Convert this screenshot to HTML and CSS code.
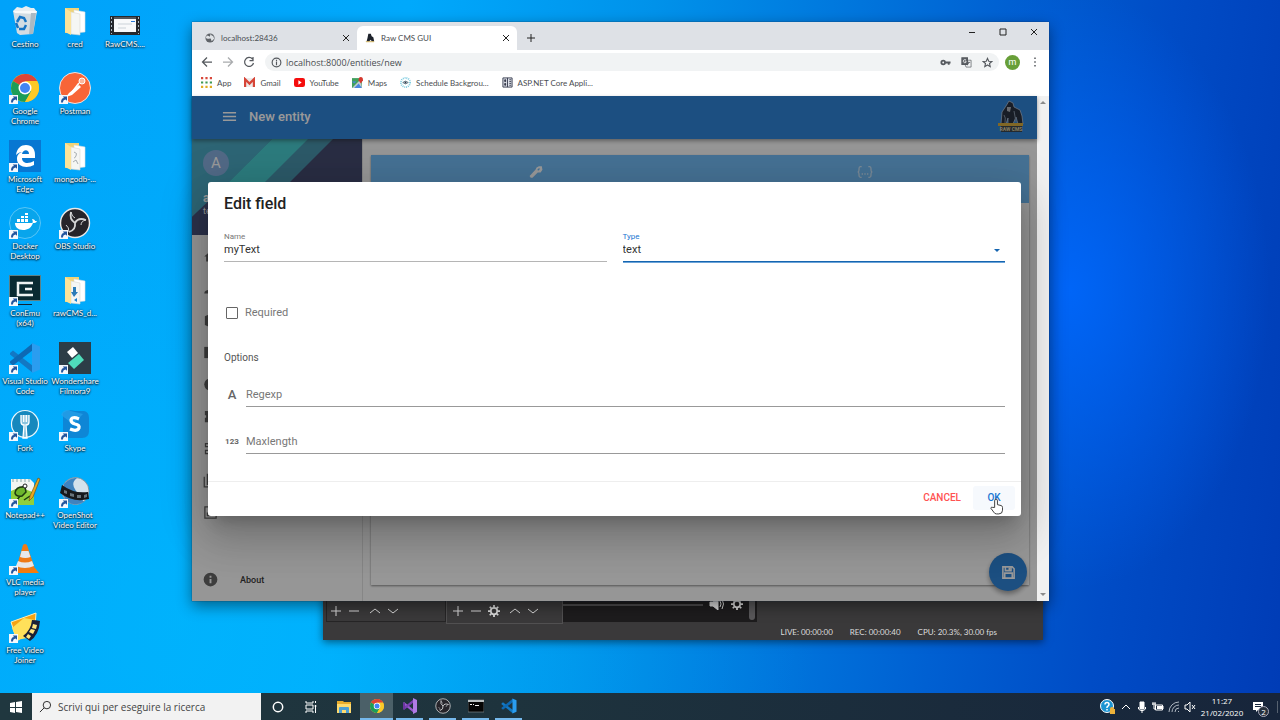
FILE: index.html
```
<!DOCTYPE html>
<html lang="it">

<head>
    <meta charset="UTF-8">
    <meta name="viewport" content="width=device-width, initial-scale=1.0">
    <title>Raw CMS GUI</title>
    <link rel="stylesheet" href="styles.css">
</head>

<body>
    <!-- Shared icons -->
    <svg class="sprite" aria-hidden="true">
        <symbol id="shortcut" viewBox="0 0 32 32">
            <rect x="0" y="23" width="9" height="9" fill="#f4f8fc" />
            <path d="M2 30.500c0-3 1-4.300 3-4.500l-1.200-1.500H8v4.200L6.600 27.500C4.500 27.800 4 29 4 30.500z" fill="#23559e" />
        </symbol>
        <symbol id="chrome" viewBox="0 0 32 32">
            <circle cx="16" cy="16" r="14" fill="#fbc928" />
            <path d="M16 16 3.900 9A14 14 0 0 1 28.100 9z" fill="#dc4437" />
            <path d="M16 2a14 14 0 0 1 12.100 7H16z" fill="#dc4437" />
            <path d="M3.900 9A14 14 0 0 0 16 30l6-10.500L16 16z" fill="#1c9d58" />
            <path d="M16 9h12.100A14 14 0 0 1 16 30l6.200-10.500z" fill="#fbc928" />
            <circle cx="16" cy="16" r="6.500" fill="#fff" />
            <circle cx="16" cy="16" r="5" fill="#4385f3" />
        </symbol>
        <symbol id="obs" viewBox="0 0 32 32">
            <circle cx="16" cy="16" r="14.500" fill="#26242a" stroke="#e8e8e8" stroke-width="1.400" />
            <g fill="none" stroke="#d4d4d6" stroke-width="1.800">
                <path d="M16 16Q10 12 12 5" />
                <path d="M16 16q3-6 11-3" />
                <path d="M16 16q1 7-6 9" />
                <path d="M12 5q1 5 4 6M27 13q-5 1-5 5M10 25q0-5-3-7" stroke-width="1" />
            </g>
        </symbol>
        <symbol id="vscode" viewBox="0 0 32 32">
            <path d="m1 11 3-2.500L24 24v7L1 12.500z" fill="#1278c4" />
            <path d="m1 21 3 2.500L24 8V1L1 19.500z" fill="#0d69b4" />
            <path d="m23 1 8 3.500v23L23 31z" fill="#2a9df0" />
        </symbol>
        <symbol id="folder" viewBox="0 0 32 32">
            <path d="M6 3h14v25H6z" fill="#f0d377" />
            <path d="m15 5 11 2v20l-11 1z" fill="#fff" stroke="#d9dee0" stroke-width=".6" />
            <path d="m12 7 9 2v21l-9-1z" fill="#f5f6f4" stroke="#d9d9d0" stroke-width=".6" />
            <path d="m6 3 6 4v23l-6-3z" fill="#fbe39a" />
        </symbol>
        <symbol id="gear" viewBox="0 0 24 24">
            <circle cx="12" cy="12" r="6.500" fill="none" stroke="currentColor" stroke-width="3.500" />
            <path d="M12 0v5M12 19v5M0 12h5M19 12h5M3.500 3.500 7 7M17 17l3.500 3.500M20.500 3.500 17 7M7 17l-3.500 3.500" stroke="currentColor" stroke-width="3.500" />
        </symbol>
    </svg>

    <main class="desktop">
        <div class="shortcuts">
            <div class="shortcut-column">
                <button class="shortcut">
                    <svg viewBox="0 0 32 32">
                        <path d="m4 6 4-4 5 1 4-2 5 2 3 0 3 4z" fill="#e9eef1" />
                        <path d="M4 6h24l-4 23-13 1-3-2z" fill="#d3dce2" />
                        <path d="M4 6h24l-1 3-21-1z" fill="#f7f9fa" />
                        <path d="M22 8h5l-3 21-4 0z" fill="#aab9c3" />
                        <path d="m8 17 3-5 4 1 2 4M17 20l-2 4h-5M7 18l2 5" fill="none" stroke="#1674c4" stroke-width="2.500" />
                    </svg>
                    <span>Cestino</span>
                </button>
                <button class="shortcut">
                    <svg viewBox="0 0 32 32"><use href="#chrome" /><use href="#shortcut" /></svg>
                    <span>Google<br>Chrome</span>
                </button>
                <button class="shortcut">
                    <svg viewBox="0 0 32 32">
                        <rect width="32" height="32" fill="#0877d2" />
                        <path d="M7 15c1-7 5-10 10-10 6 0 9 4 9 10v3H13c0 6 7 6 12 3v4c-7 4-17 2-17-6 0-4 2-6 5-7-2 0-4 1-6 3zm6-1h7c0-5-6-5-7 0z" fill="#fff" />
                        <use href="#shortcut" />
                    </svg>
                    <span>Microsoft<br>Edge</span>
                </button>
                <button class="shortcut">
                    <svg viewBox="0 0 32 32">
                        <circle cx="16" cy="16" r="15.500" fill="#08a5ec" stroke="#6ccdf8" stroke-width=".8" />
                        <path d="M6 16h17c1 0 1-2 0-4 2 0 3 1 3 2l2 0c-1 2-2 2-4 2-2 5-5 7-10 7-5 0-8-3-8-7z" fill="#fff" />
                        <path d="M8 12h3v3H8zM12 12h3v3h-3zM16 12h3v3h-3zM12 9h3v2h-3zM16 9h3v2h-3zM16 6h3v2h-3z" fill="#fff" />
                        <use href="#shortcut" />
                    </svg>
                    <span>Docker<br>Desktop</span>
                </button>
                <button class="shortcut">
                    <svg viewBox="0 0 32 32">
                        <path d="M0 1h32v26H0z" fill="#5d8084" />
                        <path d="M1 2h30v24H1z" fill="#092a32" />
                        <path d="M24 9H9v12h15M16 15h7" fill="none" stroke="#eef2f2" stroke-width="2.500" />
                        <path d="M9 30h14v1H9z" fill="#123" />
                        <use href="#shortcut" />
                    </svg>
                    <span>ConEmu<br>(x64)</span>
                </button>
                <button class="shortcut">
                    <svg viewBox="0 0 32 32"><use href="#vscode" /><use href="#shortcut" /></svg>
                    <span>Visual Studio<br>Code</span>
                </button>
                <button class="shortcut">
                    <svg viewBox="0 0 32 32">
                        <circle cx="16" cy="15" r="13.500" fill="#1688bd" stroke="#e9f6fb" stroke-width="1.200" />
                        <path d="M12 6v7q0 3 3 3l-1 13h4l-1-13q3 0 3-3V6M14.700 6v7M17.300 6v7" fill="#fff" fill-opacity=".5" stroke="#fff" stroke-width="1.300" />
                        <use href="#shortcut" />
                    </svg>
                    <span>Fork</span>
                </button>
                <button class="shortcut">
                    <svg viewBox="0 0 32 32">
                        <path d="M2 3h19l4 4v22H2z" fill="#f3f6f3" />
                        <path d="M2 15q9-6 23 2v12H2z" fill="#8fcf3c" />
                        <path d="M4 3v3M8 3v3M12 3v3M16 3v3M20 3v3" stroke="#8aa" />
                        <path d="M6 17q1-7 10-6l1 5-4 4q-6 1-7-3zM8 24l3-4M15 24l6-4" fill="#6cb52d" stroke="#1d3b10" stroke-width="1.500" />
                        <circle cx="16" cy="10" r="2" fill="#fff" stroke="#222" />
                        <path d="m20 25 1-5L29 2l2 1-7 18z" fill="#e9a720" stroke="#6a4a12" stroke-width=".6" />
                        <use href="#shortcut" />
                    </svg>
                    <span>Notepad++</span>
                </button>
                <button class="shortcut">
                    <svg viewBox="0 0 32 32">
                        <path d="m6 25 20 0 4 5H3z" fill="#f47c0e" />
                        <path d="M14 2q2-2 4 0l8 24q-9 4-19 0z" fill="#ee7a17" />
                        <path d="m12.500 8 7 0 2 6q-5 2-10.500 0zM9 18q7 3 14 0l2 5q-9 4-18 0z" fill="#e6e8ea" />
                        <use href="#shortcut" />
                    </svg>
                    <span>VLC media<br>player</span>
                </button>
                <button class="shortcut">
                    <svg viewBox="0 0 32 32">
                        <path d="m2 11 25-9-1 14-18 14z" fill="#f6a313" stroke="#fff0b8" />
                        <path d="m3 17 12-10 11 2-8 18-10 2z" fill="#ffe05a" />
                        <path d="M23 9q4 0 8 1-1 14-10 20l-7-5q8-6 9-16z" fill="#1b2036" />
                        <path d="m24 13 4 1-1 4-4-1zM22 18l4 1-2 4-4-2zM19 23l3 2-2 3-3-2z" fill="#ffe680" />
                        <use href="#shortcut" />
                    </svg>
                    <span>Free Video<br>Joiner</span>
                </button>
            </div>

            <div class="shortcut-column">
                <button class="shortcut">
                    <svg viewBox="0 0 32 32"><use href="#folder" /></svg>
                    <span>cred</span>
                </button>
                <button class="shortcut">
                    <svg viewBox="0 0 32 32">
                        <circle cx="16" cy="16" r="15.500" fill="#f86537" stroke="#fff" stroke-width=".8" />
                        <path d="m7 25 3-4 10-8 2 2-9 8z" fill="#fff" />
                        <circle cx="23" cy="9" r="3" fill="#fbb79d" stroke="#fff" />
                        <path d="m13 20 7-9" stroke="#fff" stroke-width="1.500" />
                        <use href="#shortcut" />
                    </svg>
                    <span>Postman</span>
                </button>
                <button class="shortcut">
                    <svg viewBox="0 0 32 32">
                        <use href="#folder" />
                        <path d="M15 12q4 1 2 4t-2 2M14 22l3-2 2 4" fill="none" stroke="#a7adb0" />
                    </svg>
                    <span>mongodb-...</span>
                </button>
                <button class="shortcut">
                    <svg viewBox="0 0 32 32"><use href="#obs" /><use href="#shortcut" /></svg>
                    <span>OBS Studio</span>
                </button>
                <button class="shortcut">
                    <svg viewBox="0 0 32 32">
                        <use href="#folder" />
                        <path d="M14 13h3v5h2l-4 5-3-5h2z" fill="#2c7cb8" />
                        <path d="m15 26 3-2v4z" fill="#167fd2" />
                    </svg>
                    <span>rawCMS_d...</span>
                </button>
                <button class="shortcut">
                    <svg viewBox="0 0 32 32">
                        <rect width="32" height="32" fill="#2c3d47" />
                        <path d="m8 10 6-5 5 6-6 5z" fill="#fff" />
                        <path d="m9 21 11-9 5 6-10 9z" fill="#4fdcbb" />
                        <use href="#shortcut" />
                    </svg>
                    <span>Wondershare<br>Filmora9</span>
                </button>
                <button class="shortcut">
                    <svg viewBox="0 0 32 32">
                        <path d="M4 4q5-4 12-2h9q5 1 5 7v13q0 7-7 7H9q-6-2-5-9z" fill="#0e86d6" />
                        <path d="M2 6q3-7 10-4l12 3-10 10z" fill="#2aa2ea" fill-opacity=".7" />
                        <path d="M20 10q-7-3-8 1 0 3 4 4 5 1 4 4-2 4-9 1" fill="none" stroke="#fff" stroke-width="3.200" />
                        <use href="#shortcut" />
                    </svg>
                    <span>Skype</span>
                </button>
                <button class="shortcut">
                    <svg viewBox="0 0 32 32">
                        <circle cx="16.500" cy="15" r="13.500" fill="#d5e2ec" stroke="#7c8790" stroke-width=".8" />
                        <path d="M5 8q6-7 13-6-7 5-1 13l8 11q-15 7-21-7z" fill="#3f83bf" />
                        <path d="M3 9q12 9 26 7l1 7q-16 4-29-6z" fill="#17191d" />
                        <path d="m5 14 3 1v3l-3-1zM11 17l4 1v3l-4-1zM18 19h4v3h-4zM25 19l3-1v3l-3 1z" fill="#68737c" />
                        <use href="#shortcut" />
                    </svg>
                    <span>OpenShot<br>Video Editor</span>
                </button>
            </div>

            <div class="shortcut-column">
                <button class="shortcut">
                    <svg viewBox="0 0 32 32">
                        <path d="M1 11h30v19H1z" fill="#26282c" />
                        <path d="M5 12h22v15H5z" fill="#f8f9fa" />
                        <path d="M5 12h22v2H5z" fill="#52565c" />
                        <path d="M9 19h14M9 23h8" stroke="#cbd2d8" />
                        <path d="M22 16h4v1h-4z" fill="#2b78d6" />
                        <path d="M2.500 12v17M29.500 12v17" stroke="#aebac4" stroke-dasharray="2 2" />
                    </svg>
                    <span>RawCMS....</span>
                </button>
            </div>
        </div>

        <!-- OBS, mostly hidden behind the browser -->
        <section class="obs-window">
            <div class="obs-docks">
                <div class="obs-dock">
                    <svg viewBox="0 0 12 12"><path d="M1 6h10M6 1v10" /></svg>
                    <svg viewBox="0 0 12 12"><path d="M1 6h10" /></svg>
                    <svg class="obs-gap" viewBox="0 0 12 12"><path d="m1 8 5-4 5 4" /></svg>
                    <svg viewBox="0 0 12 12"><path d="m1 4 5 4 5-4" /></svg>
                </div>
                <div class="obs-dock obs-sources">
                    <svg viewBox="0 0 12 12"><path d="M1 6h10M6 1v10" /></svg>
                    <svg viewBox="0 0 12 12"><path d="M1 6h10" /></svg>
                    <svg viewBox="0 0 12 12"><use href="#gear" /></svg>
                    <svg class="obs-gap" viewBox="0 0 12 12"><path d="m1 8 5-4 5 4" /></svg>
                    <svg viewBox="0 0 12 12"><path d="m1 4 5 4 5-4" /></svg>
                </div>
                <div class="obs-mixer">
                    <span class="obs-slider"></span>
                    <svg class="obs-volume" viewBox="0 0 16 12"><path d="M1 4h3l5-4v12L4 8H1z" fill="currentColor" /><path d="M11 3q2 3 0 6M13 1q3 5 0 10" /></svg>
                    <svg viewBox="0 0 12 12"><use href="#gear" /></svg>
                    <span class="obs-scroll"></span>
                </div>
            </div>
            <div class="obs-status">
                <span>LIVE: 00:00:00</span>
                <span>REC: 00:00:40</span>
                <span>CPU: 20.3%, 30.00 fps</span>
            </div>
        </section>

        <section class="browser">
            <div class="tab-strip">
                <div class="browser-tab">
                    <svg viewBox="0 0 12 12"><circle cx="6" cy="6" r="5.500" fill="#5f6368" /><path d="M2 3q3 0 4 2T3 7L1 6zM7 1q0 2 3 3l1 3-3 3-1-3-2-1z" fill="#dfe2e6" /></svg>
                    <span>localhost:28436</span>
                    <button class="tab-close" aria-label="Close tab"><svg viewBox="0 0 8 8"><path d="m1 1 6 6M7 1 1 7" /></svg></button>
                </div>
                <div class="browser-tab active">
                    <svg viewBox="0 0 12 12"><path d="M4 1h3l1 3 2 1 1 5H8L7 8l-2 2H2l1-4z" fill="#1d222b" /><path d="M1 10h10v1H1z" fill="#c6a23f" /></svg>
                    <span>Raw CMS GUI</span>
                    <button class="tab-close" aria-label="Close tab"><svg viewBox="0 0 8 8"><path d="m1 1 6 6M7 1 1 7" /></svg></button>
                </div>
                <button class="new-tab" aria-label="New tab"><svg viewBox="0 0 10 10"><path d="M1 5h8M5 1v8" /></svg></button>
                <div class="window-buttons">
                    <button aria-label="Minimize"><svg viewBox="0 0 8 8"><path d="M1 4.500h6" /></svg></button>
                    <button aria-label="Maximize"><svg viewBox="0 0 8 8"><path d="M1 1h6v6H1z" /></svg></button>
                    <button aria-label="Close"><svg viewBox="0 0 8 8"><path d="m1 1 6 6M7 1 1 7" /></svg></button>
                </div>
            </div>

            <div class="toolbar">
                <button aria-label="Back"><svg viewBox="0 0 24 24"><path d="M22 12H4M12 3l-9 9 9 9" /></svg></button>
                <button class="faded" aria-label="Forward"><svg viewBox="0 0 24 24"><path d="M2 12h18M12 3l9 9-9 9" /></svg></button>
                <button aria-label="Reload"><svg viewBox="0 0 24 24"><path d="M19 6a9 9 0 1 0 2 8M20 2v7h-7" /></svg></button>
                <div class="omnibox">
                    <svg viewBox="0 0 24 24"><circle cx="12" cy="12" r="9.500" /><path d="M12 10v8M12 6v2.500" /></svg>
                    <input type="text" aria-label="Address" value="localhost:8000/entities/new">
                    <svg viewBox="0 0 24 24"><circle cx="7" cy="12" r="4" stroke-width="4" /><path d="M12 12h11M19 12v5" stroke-width="4" /></svg>
                    <svg viewBox="0 0 24 24"><path d="M2 2h12v14H2z" fill="#5f6368" /><path d="M14 7h8v15H11l-2-5M14 12h6M17 10v2q0 4-4 6" stroke-width="1.500" /><path d="M11 6.500a3.500 3.500 0 1 0 0 5V9H8" stroke="#fff" stroke-width="1.500" /></svg>
                    <svg viewBox="0 0 24 24"><path d="m12 3 2.700 6.200 6.800.6-5.100 4.500 1.500 6.700-5.900-3.500L6.100 21l1.500-6.700-5.100-4.500 6.800-.6z" /></svg>
                </div>
                <button class="profile">m</button>
                <button aria-label="Menu"><svg viewBox="0 0 24 24"><path d="M12 3v3M12 10.500v3M12 18v3" stroke-width="3" /></svg></button>
            </div>

            <nav class="bookmarks">
                <a href="#"><svg viewBox="0 0 10 10"><g fill="none" stroke-width="2" stroke-dasharray="2 2"><path d="M0 1h10" stroke="#d8483b" /><path d="M0 5h10" stroke="#3f9955" /><path d="M0 9h10" stroke="#e2ac22" /></g></svg>App</a>
                <a href="#"><svg viewBox="0 0 10 10"><path d="M0 1h10v8H0z" fill="#eceaea" /><path d="M1 9V2l4 4 4-4v7" fill="none" stroke="#d64538" stroke-width="2" /></svg>Gmail</a>
                <a href="#"><svg viewBox="0 0 10 10"><rect y="1" width="10" height="8" rx="2" fill="#f50d0d" /><path d="m4 3 3 2-3 2z" fill="#fff" /></svg>YouTube</a>
                <a href="#"><svg viewBox="0 0 10 10"><path d="M0 1h9v9H0z" fill="#41a05d" /><path d="m0 10 8-8 1 8z" fill="#c2ccd0" /><path d="m0 4 4 0-2 2zM2 10l4-4 3 4z" fill="#4a86e0" /><path d="M8 6 6 3q0-3 2-3t2 3z" fill="#d5392f" /></svg>Maps</a>
                <a href="#"><svg viewBox="0 0 12 12"><circle cx="6" cy="6" r="5" fill="none" stroke="#7ccbe0" stroke-dasharray="1 1" stroke-width="2" /><path d="M3 6q3-3 6 0-3 3-6 0" fill="none" stroke="#50717f" /><circle cx="6" cy="6" r="1" fill="#334" /></svg>Schedule Backgrou...</a>
                <a href="#"><svg viewBox="0 0 12 12"><path d="M1 1h10v10H1zM6 1v10" fill="#dfe2ea" stroke="#343a4d" /><path d="M3 3h1v2H3zM3 7h1v2H3zM8 3h2M8 5h2M8 7h2M8 9h2" stroke="#343a4d" /></svg>ASP.NET Core Appli...</a>
            </nav>

            <div class="viewport">
                <div class="app">
                    <header class="app-bar">
                        <button aria-label="Toggle menu"><svg viewBox="0 0 16 16"><path d="M1 4h14M1 8h14M1 12h14" stroke="currentColor" stroke-width="1.500" /></svg></button>
                        <h1>New entity</h1>
                        <svg class="app-logo" viewBox="0 0 28 34">
                            <path d="M4 25h21v7H4z" fill="#27313a" />
                            <path d="M9 6 12 1l4 2 1 4 6 3 2 6 1 8h-5l-2-7-3 7h-5v-6l-2 6H4l1-12z" fill="#111b2c" stroke="#b9c9dd" stroke-opacity=".7" />
                            <path d="m10 7 4 0-1 5-3-1z" fill="#a4a9b0" />
                            <path d="M7 15q2 2 1 8M17 11l2 11" fill="none" stroke="#76869a" />
                            <path d="M1 23h25v3H1z" fill="#d3a32a" />
                            <text x="14" y="31" text-anchor="middle">RAW CMS</text>
                        </svg>
                    </header>

                    <div class="app-body">
                        <aside class="drawer">
                            <div class="drawer-user">
                                <svg class="drawer-art" viewBox="0 0 170 95" preserveAspectRatio="none" aria-hidden="true">
                                    <path d="M0 0h170v95H0z" fill="#303960" />
                                    <path d="M0 0h141L45 95 0 79z" fill="#368aa5" />
                                    <path d="M80 0h36L20 95H0V79z" fill="#37c7cc" />
                                    <path d="M0 0h80L0 79z" fill="#39a0bd" />
                                    <path d="M0 77 32 47v48H0z" fill="#36416f" />
                                </svg>
                                <span class="avatar">A</span>
                                <strong>a</strong>
                                <small>te</small>
                            </div>
                            <ul class="drawer-menu">
                                <li><svg viewBox="0 0 24 24"><path d="M10 20v-6h4v6h5v-8h3L12 3 2 12h3v8z" /></svg></li>
                                <li><svg viewBox="0 0 24 24"><path d="M2 20q0-6 10-6t10 6zM12 4a4 4 0 1 1 0 8 4 4 0 0 1 0-8z" /></svg></li>
                                <li><svg viewBox="0 0 24 24"><path d="M3 5q9-5 18 0v14q-9 5-18 0z" /></svg></li>
                                <li><svg viewBox="0 0 24 24"><path d="M2 3h20v18H2z" /></svg></li>
                                <li><svg viewBox="0 0 24 24"><circle cx="12" cy="12" r="10" /></svg></li>
                                <li><svg viewBox="0 0 24 24"><path d="M3 3h7v2h4V3h7v7h-2v4h2v7h-7v-2h-4v2H3v-7h2v-4H3z" /></svg></li>
                                <li><svg viewBox="0 0 24 24"><path d="M4 4h5v5H4zM4 15h5v5H4zM15 9h5v5h-5zM9 6l6 5-6 6" fill="none" stroke="currentColor" stroke-width="2" /></svg></li>
                                <li><svg viewBox="0 0 24 24"><path d="M7 2h15v16H7zM2 6v16h16" fill="none" stroke="currentColor" stroke-width="2" /></svg></li>
                                <li><svg viewBox="0 0 24 24"><path d="M3 3h18v18H3zM7 12v5h5" fill="none" stroke="currentColor" stroke-width="2" /></svg></li>
                            </ul>
                            <a class="drawer-about" href="#">
                                <svg viewBox="0 0 24 24"><path d="M12 1a11 11 0 1 0 0 22 11 11 0 0 0 0-22zm1.500 17h-3v-7h3zm0-9h-3V6h3z" /></svg>
                                About
                            </a>
                        </aside>

                        <div class="content">
                            <div class="card">
                                <div class="card-tabs">
                                    <button aria-label="Fields"><svg viewBox="0 0 24 24"><path d="m1 19 10-11q1-5 6-6h5l1 6-3 5-5 0-9 9H3z" fill="currentColor" /><path d="m15 9 3-3" stroke="#64b5f6" stroke-width="2" /></svg></button>
                                    <button aria-label="Json"><svg viewBox="0 0 24 18"><path d="M7 1H5q-2 0-2 3v2q0 3-2 3 2 0 2 3v2q0 3 2 3h2M17 1h2q2 0 2 3v2q0 3 2 3-2 0-2 3v2q0 3-2 3h-2" fill="none" stroke="currentColor" stroke-width="2" /><path d="M7 12h2M11 12h2M15 12h2" stroke="currentColor" stroke-width="2" /></svg></button>
                                </div>
                            </div>
                        </div>
                    </div>

                    <button class="fab" aria-label="Save"><svg viewBox="0 0 24 24"><path d="M3 3h15l3 3v15H3zM7 3v6h9V3M6 21v-8h12v8" fill="none" stroke="currentColor" stroke-width="2.500" /><path d="M12 4h3v4h-3z" fill="currentColor" /></svg></button>

                    <div class="overlay">
                        <form class="dialog" role="dialog" aria-labelledby="dialogTitle">
                            <h2 id="dialogTitle">Edit field</h2>

                            <div class="field-row">
                                <div class="field">
                                    <label for="fieldName">Name</label>
                                    <input type="text" id="fieldName" value="myText">
                                </div>
                                <div class="field focused">
                                    <label for="fieldType">Type</label>
                                    <select id="fieldType">
                                        <option selected>text</option>
                                    </select>
                                    <svg class="caret" viewBox="0 0 8 4"><path d="M0 0h8L4 4z" /></svg>
                                </div>
                            </div>

                            <label class="checkbox">
                                <input type="checkbox" id="required">
                                Required
                            </label>

                            <h3>Options</h3>

                            <div class="option-field">
                                <label class="letter" for="regexp">A</label>
                                <input type="text" id="regexp" placeholder="Regexp">
                            </div>
                            <div class="option-field">
                                <label for="maxlength">123</label>
                                <input type="text" id="maxlength" placeholder="Maxlength">
                            </div>

                            <div class="dialog-actions">
                                <button type="button" class="cancel-btn">CANCEL</button>
                                <button type="button" class="ok-btn">OK
                                    <svg class="cursor" viewBox="0 0 14 18" aria-hidden="true"><path d="M5 10V3q0-2 1.500-2T8 3v4l4 1q1.500.5 1.500 2v3q0 4-4 4H7q-2 0-3-2l-3-4q0-2 2-1z" fill="#fff" stroke="#333" /></svg>
                                </button>
                            </div>
                        </form>
                    </div>
                </div>
                <div class="scrollbar" aria-hidden="true">
                    <svg viewBox="0 0 6 4"><path d="m0 4 3-3 3 3z" /></svg>
                    <svg viewBox="0 0 6 4"><path d="m0 0 3 3 3-3z" /></svg>
                </div>
            </div>
        </section>
    </main>

    <footer class="taskbar">
        <button class="task start" aria-label="Start"><svg class="small" viewBox="0 0 12 12"><path d="m0 2 5-1v5H0zM6 1l6-1v6H6zM0 7h5v5l-5-1zM6 7h6v5l-6-1z" fill="#fff" /></svg></button>
        <label class="search">
            <svg viewBox="0 0 14 14"><circle cx="8.500" cy="5.500" r="4" /><path d="M5.500 8.500 1 13" /></svg>
            <input type="text" placeholder="Scrivi qui per eseguire la ricerca" aria-label="Ricerca">
        </label>
        <button class="task" aria-label="Cortana"><svg class="small" viewBox="0 0 12 12"><circle cx="6" cy="6" r="4.700" fill="none" stroke="#fff" stroke-width="1.500" /></svg></button>
        <button class="task" aria-label="Task view"><svg class="small" viewBox="0 0 12 12"><path d="M1 0v2h7V0M1 12v-2h7v2M1 4h7v4H1zM10.500 0v2M10.500 4v8M9.500 5h2" fill="none" stroke="#fff" /></svg></button>
        <button class="task" aria-label="Explorer"><svg viewBox="0 0 16 16"><path d="M1 2h6l1 1h7v11H1z" fill="#e9ad2d" /><path d="M1 5h14v9H1z" fill="#ffda6e" /><path d="M3 14V9q0-1 1-1h8q1 0 1 1v5h-3v-3H6v3z" fill="#4c9fd5" /></svg></button>
        <button class="task running current" aria-label="Chrome"><svg viewBox="0 0 32 32"><use href="#chrome" /></svg></button>
        <button class="task running" aria-label="Visual Studio"><svg viewBox="0 0 16 16"><path d="m1 5 1-1 10 8v3L1 6z" fill="#9b59d0" /><path d="m1 11 1 1L12 4V1L1 10z" fill="#7b3fb5" /><path d="M1 5h2v6H1z" fill="#6a35a0" /><path d="m11 0 4 2v12l-4 2z" fill="#b07be6" /></svg></button>
        <button class="task running" aria-label="OBS"><svg viewBox="0 0 32 32"><use href="#obs" /></svg></button>
        <button class="task running" aria-label="Terminal"><svg viewBox="0 0 16 16"><path d="M0 2h16v12H0z" fill="#050505" stroke="#8e9698" stroke-width=".6" /><path d="M0 2h16v2H0z" fill="#b8bfc1" /><path d="M2 6.500h2M5 6.500h1M7 7.500h4" stroke="#eee" /></svg></button>
        <button class="task running" aria-label="Visual Studio Code"><svg viewBox="0 0 32 32"><use href="#vscode" /></svg></button>

        <div class="tray">
            <svg class="tray-help" viewBox="0 0 16 16"><circle cx="7" cy="7" r="6.500" fill="#1d94d2" stroke="#fff" /><path d="M5 5.500q0-2 2-2t2 2q0 1-2 2.500v1M7 10v1.500" fill="none" stroke="#fff" stroke-width="1.500" /><path d="M10 10q0-2 2-2t2 2h1v5h-5v-5z" fill="#edb23a" /></svg>
            <svg viewBox="0 0 12 12"><path d="m2 8 4-4 4 4" /></svg>
            <svg viewBox="0 0 12 12"><path d="M4 1h4v7H4z" fill="#fff" /><path d="M2.500 6v2l2 1.500h3l2-1.500V6M6 9v3" /></svg>
            <svg viewBox="0 0 12 12"><path d="M3.500 4h7v5h-7z" /><path d="M5 5h5v3H5z" fill="#fff" stroke="none" /><path d="M11 5v3M1 1v3M3 1v3M0 3h4M2 4v4h2" /></svg>
            <svg viewBox="0 0 12 12"><path d="M1 11A10 10 0 0 1 11 1M4 11a7 7 0 0 1 7-7M7 11a4 4 0 0 1 4-4M10 11l1-1" stroke="#aeb6c0" /></svg>
            <svg viewBox="0 0 12 12"><path d="M1 4h2l3-3v10L3 8H1zM8 4l3 4M11 4 8 8" /></svg>
            <div class="clock"><span>11:27</span><span>21/02/2020</span></div>
            <button class="notifications" aria-label="Notifications">
                <svg viewBox="0 0 12 12"><path d="M1 1h10v8H6l-2 2V9H1z" fill="#fff" stroke="none" /><path d="M3 3.500h6M3 5.500h6" stroke="#16263c" /></svg>
                <span class="badge">2</span>
            </button>
        </div>
    </footer>
</body>

</html>
```
FILE: styles.css
```
* {
    margin: 0;
    padding: 0;
    box-sizing: border-box;
}

body {
    min-height: 100vh;
    display: flex;
    flex-direction: column;
    font-family: "Open Sans", "Noto Sans", sans-serif;
    overflow: hidden;
}

button,
input,
select {
    font: inherit;
    color: inherit;
    border: none;
    background: none;
    outline: none;
}

svg {
    display: block;
    flex: none;
}

a {
    color: inherit;
    text-decoration: none;
}

.sprite {
    position: absolute;
    width: 0;
    height: 0;
}

/* Desktop */
.desktop {
    position: relative;
    flex: 1;
    display: flex;
    background:
        radial-gradient(ellipse 200px 300px at 1070px 290px, rgba(0, 104, 255, 0.85), rgba(0, 104, 255, 0) 100%),
        radial-gradient(ellipse 50% 90% at 14% 90%, rgba(0, 200, 255, 0.35), rgba(0, 200, 255, 0) 100%),
        linear-gradient(97deg, #00a2fa 0%, #00a9fc 30%, #0092ea 48%, #0060d2 74%, #004cc6 86%, #003cb6 100%);
}

.shortcuts {
    display: flex;
    padding: 5px 0 15px;
}

.shortcut-column {
    display: grid;
    grid-template-rows: repeat(10, 1fr);
    width: 50px;
}

.shortcut {
    display: flex;
    flex-direction: column;
    align-items: center;
    justify-content: flex-start;
    gap: 2px;
    color: white;
    font-family: Lato, "Open Sans", sans-serif;
    font-size: 8px;
    line-height: 10px;
    white-space: nowrap;
    text-shadow: 0 1px 2px #000, 0 0 2px #002a50;
}

.shortcut svg {
    width: 32px;
    height: 32px;
}

/* OBS window */
.obs-window {
    position: absolute;
    left: 323px;
    right: 237px;
    bottom: 53px;
    background: #3a393a;
    color: #dcdcdc;
    box-shadow: 0 2px 8px rgba(0, 0, 0, 0.5);
}

.obs-docks {
    display: flex;
    height: 50px;
    padding-left: 3px;
}

.obs-docks svg {
    width: 12px;
    height: 12px;
    fill: none;
    stroke: currentColor;
}

.obs-dock {
    display: flex;
    align-items: flex-end;
    gap: 6px;
    width: 120px;
    height: 48px;
    padding: 0 3px 4px;
    border: 1px solid #262526;
}

.obs-sources {
    width: 117px;
    height: 50px;
    padding: 0 5px 6px;
    border-color: #515051;
}

.obs-gap {
    margin-left: 3px;
}

.obs-mixer {
    display: flex;
    align-items: flex-end;
    gap: 6px;
    width: 194px;
    height: 48px;
    padding: 0 2px 2px 0;
    background: #1d1c1d;
}

.obs-slider {
    flex: 1;
    height: 2px;
    margin-bottom: 14px;
    background: #4b4a4b;
}

.obs-mixer svg {
    margin-bottom: 10px;
}

.obs-mixer .obs-volume {
    width: 16px;
}

.obs-scroll {
    width: 6px;
    height: 40px;
    border-radius: 3px;
    background: #59585a;
}

.obs-status {
    display: flex;
    justify-content: flex-end;
    gap: 17px;
    padding: 3px 46px 3px 0;
    font-family: Lato, "Open Sans", sans-serif;
    font-size: 8px;
    line-height: 10px;
}

/* Browser window */
.browser {
    position: absolute;
    left: 192px;
    right: 231px;
    top: 22px;
    bottom: 92px;
    display: flex;
    flex-direction: column;
    background: white;
    box-shadow: 0 0 1px #1b2c44, 0 5px 14px rgba(0, 0, 0, 0.45);
    font-family: Lato, "Open Sans", sans-serif;
    font-size: 8px;
    color: #4a4d51;
}

.browser button {
    display: flex;
    align-items: center;
    justify-content: center;
}

.tab-strip {
    display: flex;
    align-items: flex-end;
    height: 28px;
    padding-left: 5px;
    background: #dee1e6;
}

.tab-strip svg {
    fill: none;
    stroke: #222;
}

.browser-tab {
    display: flex;
    align-items: center;
    gap: 6px;
    width: 160px;
    height: 24px;
    padding: 0 7px 0 8px;
    border-radius: 6px 6px 0 0;
}

.browser-tab.active {
    background: white;
}

.browser-tab > svg {
    width: 10px;
    height: 10px;
    stroke: none;
}

.browser-tab span {
    flex: 1;
}

.tab-close svg {
    width: 8px;
    height: 8px;
}

.new-tab {
    width: 28px;
    height: 24px;
}

.new-tab svg {
    width: 10px;
    height: 10px;
}

.window-buttons {
    display: flex;
    align-self: flex-start;
    margin-left: auto;
}

.window-buttons button {
    width: 31px;
    height: 20px;
}

.window-buttons svg {
    width: 8px;
    height: 8px;
}

.toolbar {
    display: flex;
    align-items: center;
    gap: 2px;
    height: 24px;
    padding: 0 5px;
}

.toolbar button {
    width: 19px;
    height: 20px;
}

.toolbar svg {
    width: 12px;
    height: 12px;
    fill: none;
    stroke: #55595e;
    stroke-width: 2.5;
}

.toolbar .faded {
    opacity: 0.5;
}

.omnibox {
    flex: 1;
    display: flex;
    align-items: center;
    gap: 10px;
    height: 18px;
    margin: 0 4px 0 5px;
    padding: 0 6px;
    border-radius: 9px;
    background: #f1f3f4;
}

.omnibox input {
    flex: 1;
    margin-left: -6px;
    font-family: "Open Sans", sans-serif;
    font-size: 9px;
}

.omnibox svg {
    width: 11px;
    height: 11px;
}

.toolbar .profile {
    width: 15px;
    height: 15px;
    margin-right: 3px;
    border-radius: 50%;
    background: #689f38;
    color: white;
    font-family: Roboto, sans-serif;
    font-size: 9px;
}

.bookmarks {
    display: flex;
    align-items: center;
    gap: 13px;
    height: 22px;
    padding: 0 9px 5px;
}

.bookmarks a {
    display: flex;
    align-items: center;
    gap: 5px;
}

.bookmarks svg {
    width: 11px;
    height: 11px;
}

.viewport {
    flex: 1;
    display: flex;
    font-family: Roboto, sans-serif;
}

.scrollbar {
    display: flex;
    flex-direction: column;
    align-items: center;
    justify-content: space-between;
    width: 12px;
    padding: 4px 0;
    background: #f1f1f1;
}

.scrollbar svg {
    width: 6px;
    height: 4px;
    fill: #8b8b8b;
}

/* Application */
.app {
    position: relative;
    flex: 1;
    display: flex;
    flex-direction: column;
    background: #fafafa;
}

.app-bar {
    display: flex;
    align-items: center;
    gap: 12px;
    height: 43px;
    padding: 0 12px 2px 30px;
    background: #1976d2;
    color: white;
    box-shadow: 0 2px 4px rgba(0, 0, 0, 0.4);
    z-index: 1;
}

.app-bar button svg {
    width: 15px;
    height: 15px;
}

.app-bar h1 {
    flex: 1;
    font-size: 13px;
    font-weight: 500;
    line-height: 16px;
}

.app-logo {
    width: 28px;
    height: 34px;
    font-size: 5px;
    font-weight: 700;
    fill: #dccb9b;
}

.app-body {
    flex: 1;
    display: flex;
}

.drawer {
    display: flex;
    flex-direction: column;
    width: 171px;
    border-right: 1px solid #ddd;
}

.drawer-user {
    position: relative;
    height: 96px;
    padding: 11px;
    color: white;
}

.drawer-user > * {
    position: relative;
    display: block;
}

.drawer-user .drawer-art {
    position: absolute;
    inset: 0;
    width: 100%;
    height: 100%;
}

.avatar {
    width: 26px;
    height: 26px;
    border-radius: 50%;
    background: #7ba7dd;
    font-size: 15px;
    line-height: 26px;
    text-align: center;
}

.drawer-user strong {
    margin-top: 15px;
    font-size: 12px;
    line-height: 14px;
}

.drawer-user small {
    font-size: 9px;
    line-height: 12px;
}

.drawer-menu {
    list-style: none;
    padding-top: 5px;
}

.drawer-menu li {
    display: flex;
    align-items: center;
    height: 32px;
    padding-left: 11px;
}

.drawer svg {
    fill: #555;
    color: #555;
}

.drawer-menu svg,
.drawer-about svg {
    width: 15px;
    height: 15px;
}

.drawer-about {
    display: flex;
    align-items: center;
    gap: 22px;
    margin-top: auto;
    padding: 13px 11px 14px;
    color: #222;
    font-size: 9px;
    font-weight: 500;
}

.content {
    flex: 1;
    display: flex;
    padding: 16px 8px;
}

.card {
    flex: 1;
    background: #fcfcfc;
    box-shadow: 0 1px 2px rgba(0, 0, 0, 0.5);
}

.card-tabs {
    display: flex;
    height: 48px;
    background: #64b5f6;
    color: white;
}

.card-tabs button {
    flex: 1;
    padding-bottom: 14px;
}

.card-tabs button + button {
    color: #c5e2fa;
}

.card-tabs svg {
    width: 16px;
    height: 14px;
}

.app .fab {
    position: absolute;
    right: 10px;
    bottom: 10px;
    width: 38px;
    height: 38px;
    border-radius: 50%;
    background: #1976d2;
    color: white;
    box-shadow: 0 3px 5px rgba(0, 0, 0, 0.4);
}

.fab svg {
    width: 15px;
    height: 15px;
}

.overlay {
    position: absolute;
    inset: 0;
    z-index: 2;
    display: flex;
    align-items: center;
    padding: 0 16px;
    background: rgba(33, 33, 33, 0.46);
}

/* Dialog */
.dialog {
    flex: 1;
    border-radius: 3px;
    background: white;
    color: #333;
    box-shadow: 0 11px 15px -7px rgba(0, 0, 0, 0.2), 0 24px 38px 3px rgba(0, 0, 0, 0.14), 0 9px 46px 8px rgba(0, 0, 0, 0.12);
    font-size: 11px;
}

.dialog h2 {
    padding: 12px 16px 11px;
    color: #222;
    font-size: 16px;
    font-weight: 500;
    line-height: 20px;
}

.field-row {
    display: grid;
    grid-template-columns: 1fr 1fr;
    gap: 16px;
    padding: 7px 16px 0;
}

.field {
    position: relative;
    border-bottom: 1px solid #b5b5b5;
}

.field label {
    display: block;
    color: #777;
    font-size: 8px;
    line-height: 10px;
}

.field input,
.field select {
    display: block;
    width: 100%;
    height: 19px;
    padding-bottom: 3px;
    appearance: none;
}

.field.focused {
    border-color: #1565b0;
    box-shadow: 0 1px 0 #6ba3d8;
}

.field.focused label {
    color: #1976d2;
}

.caret {
    position: absolute;
    right: 5px;
    bottom: 9px;
    width: 6px;
    height: 3px;
    fill: #1565b0;
}

.checkbox {
    display: flex;
    align-items: center;
    gap: 7px;
    padding: 43px 18px 0;
    color: #777;
    line-height: 16px;
}

.checkbox input {
    width: 12px;
    height: 12px;
    border: 1px solid #666;
    border-radius: 1px;
    appearance: none;
}

.dialog h3 {
    padding: 29px 16px 17px;
    color: #555;
    font-size: 10px;
    font-weight: 400;
    line-height: 16px;
}

.option-field {
    display: flex;
    align-items: center;
    gap: 6px;
    padding: 0 16px 23px;
}

.option-field label {
    width: 16px;
    color: #666;
    font-size: 8px;
    font-weight: 700;
    text-align: center;
}

.option-field .letter {
    font-size: 13px;
    font-weight: 500;
}

.option-field input {
    flex: 1;
    height: 24px;
    border-bottom: 1px solid #999;
}

.option-field input::placeholder {
    color: #777;
}

.dialog-actions {
    display: flex;
    justify-content: flex-end;
    gap: 5px;
    margin-top: 4px;
    padding: 4px 6px 6px;
    border-top: 1px solid #eee;
    font-size: 10px;
    font-weight: 500;
}

.dialog-actions button {
    height: 24px;
    padding: 0 7px;
    border-radius: 3px;
}

.cancel-btn {
    color: #ff5252;
}

.dialog-actions .ok-btn {
    position: relative;
    width: 42px;
    background: #f6f9fd;
    color: #1976d2;
}

.cursor {
    position: absolute;
    left: 17px;
    top: 12px;
    width: 13px;
    height: 17px;
}

/* Taskbar */
.taskbar {
    display: flex;
    height: 27px;
    background: linear-gradient(to right, #20373f, #1e333d 40%, #17253b);
    color: white;
}

.task {
    display: flex;
    align-items: center;
    justify-content: center;
    width: 33px;
}

.task.start {
    width: 32px;
}

.task svg {
    width: 16px;
    height: 16px;
}

.task .small {
    width: 12px;
    height: 12px;
}

.task.running {
    width: 27px;
    margin: 0 3px;
    border-bottom: 2px solid #76b9ed;
}

.task.current {
    width: 33px;
    margin: 0;
    background: #4b6068;
}

.search {
    display: flex;
    align-items: center;
    gap: 6px;
    width: 229px;
    padding-left: 7px;
    background: #f2f2f2;
    color: #333;
    font-size: 10px;
}

.search svg {
    width: 13px;
    height: 13px;
    fill: none;
    stroke: #222;
}

.search input {
    flex: 1;
}

.search input::placeholder {
    color: #444;
}

.tray {
    display: flex;
    align-items: center;
    gap: 4px;
    margin-left: auto;
    padding-right: 2px;
}

.tray svg {
    width: 12px;
    height: 12px;
    fill: none;
    stroke: #fff;
}

.tray .tray-help {
    width: 16px;
    height: 16px;
    stroke: none;
}

.clock {
    display: flex;
    flex-direction: column;
    align-items: center;
    width: 44px;
    font-size: 8px;
    line-height: 12px;
}

.notifications {
    position: relative;
    width: 30px;
    padding-left: 4px;
    border-right: 1px solid #56616f;
    color: white;
}

.badge {
    position: absolute;
    left: 10px;
    top: 5px;
    width: 11px;
    height: 11px;
    border: 1px solid #aab;
    border-radius: 50%;
    background: #27303c;
    font-size: 8px;
    line-height: 9px;
    text-align: center;
}
```
